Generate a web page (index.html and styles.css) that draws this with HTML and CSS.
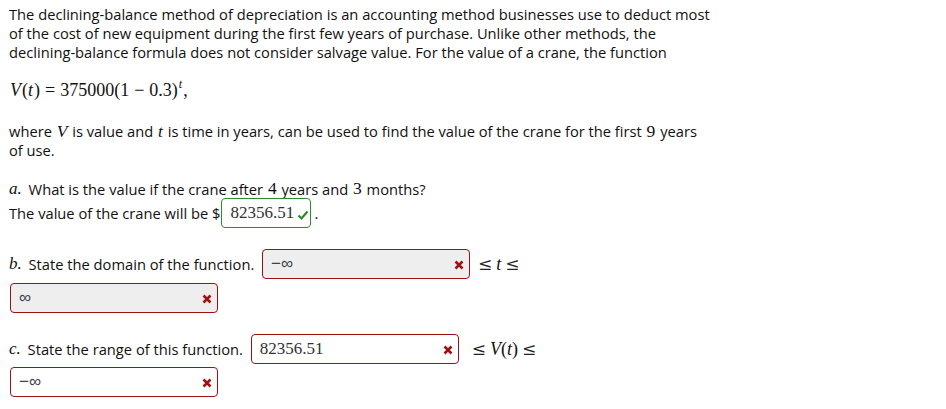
FILE: index.html
```html
<!DOCTYPE html>
<html>
<head>
<meta charset="utf-8">
<link rel="stylesheet" href="styles.css">
</head>
<body>
<div class="page">
  <p class="para">The declining-balance method of depreciation is an accounting method businesses use to deduct most of the cost of new equipment during the first few years of purchase. Unlike other methods, the declining-balance formula does not consider salvage value. For the value of a crane, the function</p>
  <div class="formula"><span class="mi">V</span><span class="mo">(</span><span class="mi">t</span><span class="mo">)</span><span class="rel">=</span><span class="mn">375000(1</span><span class="bin">−</span><span class="mn">0.3)</span><sup class="mi">t</sup><span class="mn">,</span></div>
  <p class="para">where <span class="mi big">V</span> is value and <span class="mi big">t</span> is time in years, can be used to find the value of the crane for the first <span class="mn big">9</span> years of use.</p>

  <div class="part part-a">
    <div class="row"><span class="mi lab">a.</span> What is the value if the crane after <span class="mn big">4</span> years and <span class="mn big">3</span> months?</div>
    <div class="row row-ans">The value of the crane will be $<span class="ans ok"><span class="val">82356.51</span><svg class="chk" viewBox="0 0 12 12" width="12" height="12"><path d="M1.5 6.5 L4.5 9.5 L10.5 2.5" fill="none" stroke="#2a8a2a" stroke-width="2.2"/></svg></span>.</div>
  </div>

  <div class="part part-b">
    <div class="row"><span class="mi lab">b.</span> State the domain of the function. <span class="ans bad gray wide"><span class="sym">−∞</span><svg class="x" viewBox="0 0 10 10" width="10" height="10"><path d="M1.5 1.5 L8.5 8.5 M8.5 1.5 L1.5 8.5" stroke="#a01010" stroke-width="2.6"/></svg></span><span class="ineq"><span class="le">≤</span><span class="mi">t</span><span class="le">≤</span></span></div>
    <div class="row"><span class="ans bad gray"><span class="sym">∞</span><svg class="x" viewBox="0 0 10 10" width="10" height="10"><path d="M1.5 1.5 L8.5 8.5 M8.5 1.5 L1.5 8.5" stroke="#a01010" stroke-width="2.6"/></svg></span></div>
  </div>

  <div class="part part-c">
    <div class="row"><span class="mi lab">c.</span> State the range of this function. <span class="ans bad wide"><span class="val">82356.51</span><svg class="x" viewBox="0 0 10 10" width="10" height="10"><path d="M1.5 1.5 L8.5 8.5 M8.5 1.5 L1.5 8.5" stroke="#a01010" stroke-width="2.6"/></svg></span><span class="ineq ineq-c"><span class="le">≤</span><span class="mi">V</span><span class="mo">(</span><span class="mi">t</span><span class="mo">)</span><span class="le">≤</span></span></div>
    <div class="row"><span class="ans bad"><span class="sym">−∞</span><svg class="x" viewBox="0 0 10 10" width="10" height="10"><path d="M1.5 1.5 L8.5 8.5 M8.5 1.5 L1.5 8.5" stroke="#a01010" stroke-width="2.6"/></svg></span></div>
  </div>
</div>
</body>
</html>
```
FILE: styles.css
```css
html, body { margin: 0; padding: 0; background: #fff; }
.page {
  padding: 5px 9px 0 9px;
  font-family: "Open Sans", sans-serif;
  font-size: 14.7px;
  color: #111;
  width: 701px;
}
.para { margin: 0; line-height: 19px; }
.formula {
  font-family: "Liberation Serif", serif;
  font-size: 18px;
  margin: 11px 0 27px 1px;
  height: 22px;
  line-height: 22px;
}
.mi { font-family: "Liberation Serif", serif; font-style: italic; }
.mn, .mo { font-family: "Liberation Serif", serif; }
.formula .mi { margin-right: 1px; }
.big { font-size: 17.5px; padding: 0 1px; line-height: 1; }
.rel { margin: 0 5px 0 5px; }
.bin { margin: 0 5px; }
.formula sup { font-size: 12px; vertical-align: 8px; margin-left: 1px; }
.part { font-size: 14.7px; }
.part-a { margin-top: 18px; }
.row { line-height: 22px; display: flex; align-items: center; white-space: pre; }
.row-ans { margin-top: -2px; }
.lab { font-size: 17px; margin-right: 3px; }
.ans {
  display: inline-flex;
  align-items: center;
  box-sizing: border-box;
  height: 30px;
  border-radius: 4px;
  border: 1px solid;
  padding: 0 5px 0 8px;
  margin-left: 1px;
}
.ans.ok { border-color: #2f8a2f; width: 90px; padding-right: 4px; margin-right: 3px; }
.ans.bad { border-color: #9a1212; width: 208px; justify-content: space-between; }
.ans.gray { background: #eee; }
.val { font-family: "Liberation Serif", serif; font-size: 17px; color: #333; }
.chk { margin-left: 3px; margin-top: 3px; flex-shrink: 0; }
.sym { font-family: "Liberation Sans", sans-serif; font-size: 17px; color: #3c4250; }
.x { flex-shrink: 0; margin-top: 1px; }
.ineq { display: inline-flex; align-items: center; font-family: "Liberation Serif", serif; font-size: 18px; margin-left: 8px; color: #111; }
.ineq-c { margin-left: 13px; }
.le { font-family: "DejaVu Serif", serif; font-size: 17px; margin: 0 4px; color: #222; }
.ineq .le:first-child { margin-left: 0; }
.part-b { margin-top: 21px; }
.part-b .row + .row { margin-top: 4px; }
.part-c { margin-top: 21px; }
.part-c .row + .row { margin-top: 3px; }
.part-b .wide, .part-c .wide { margin-left: 4px; }
```
